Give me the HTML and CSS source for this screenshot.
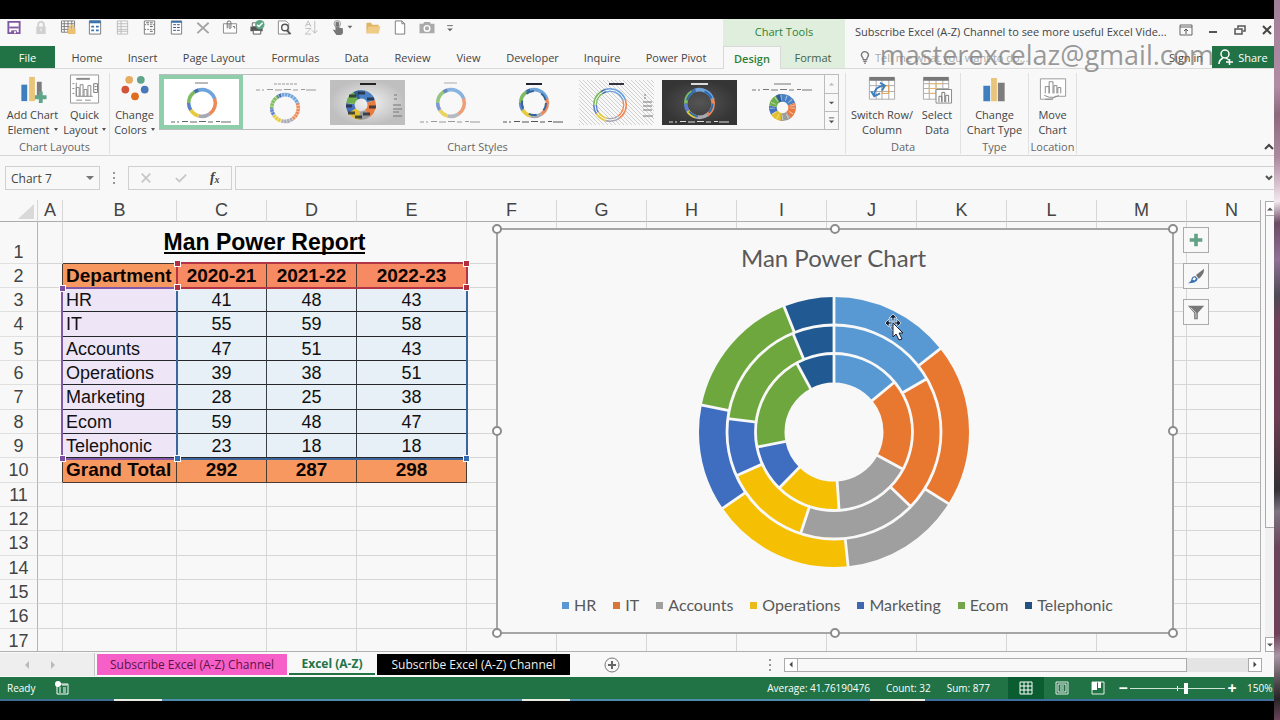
FILE: index.html
```html
<!DOCTYPE html>
<html lang="en">
<head>
<meta charset="utf-8">
<title>Subscribe Excel (A-Z) Channel to see more useful Excel Videos</title>
<link rel="stylesheet" href="styles.css">
</head>
<body>
<svg class="defs" aria-hidden="true">
  <symbol id="ring" viewBox="0 0 36 36">
    <g fill="none" stroke-width="4">
      <circle cx="18" cy="18" r="15" stroke="#6fa3dc" pathLength="100" stroke-dasharray="26 100" transform="rotate(-110 18 18)"/>
      <circle cx="18" cy="18" r="15" stroke="#ee8a58" pathLength="100" stroke-dasharray="21 100" transform="rotate(-20 18 18)"/>
      <circle cx="18" cy="18" r="15" stroke="#a9a9b4" pathLength="100" stroke-dasharray="14 100" transform="rotate(55 18 18)"/>
      <circle cx="18" cy="18" r="15" stroke="#e8cb3c" pathLength="100" stroke-dasharray="12 100" transform="rotate(105 18 18)"/>
      <circle cx="18" cy="18" r="15" stroke="#5c80cc" pathLength="100" stroke-dasharray="9 100" transform="rotate(148 18 18)"/>
      <circle cx="18" cy="18" r="15" stroke="#7fbb60" pathLength="100" stroke-dasharray="16 100" transform="rotate(180 18 18)"/>
      <circle cx="18" cy="18" r="15" stroke="#4570a8" pathLength="100" stroke-dasharray="5 100" transform="rotate(236 18 18)"/>
    </g>
  </symbol>
  <symbol id="thick" viewBox="0 0 30 30">
    <g fill="none" stroke-width="8">
      <circle cx="15" cy="15" r="10" stroke="#4a80c4" pathLength="100" stroke-dasharray="22 100" transform="rotate(-100 15 15)"/>
      <circle cx="15" cy="15" r="10" stroke="#e87b42" pathLength="100" stroke-dasharray="20 100" transform="rotate(-20 15 15)"/>
      <circle cx="15" cy="15" r="10" stroke="#9c9c9c" pathLength="100" stroke-dasharray="14 100" transform="rotate(52 15 15)"/>
      <circle cx="15" cy="15" r="10" stroke="#e2bf2c" pathLength="100" stroke-dasharray="14 100" transform="rotate(98 15 15)"/>
      <circle cx="15" cy="15" r="10" stroke="#4570c0" pathLength="100" stroke-dasharray="11 100" transform="rotate(148 15 15)"/>
      <circle cx="15" cy="15" r="10" stroke="#6fae4c" pathLength="100" stroke-dasharray="15 100" transform="rotate(188 15 15)"/>
      <circle cx="15" cy="15" r="10" stroke="#2f5f96" pathLength="100" stroke-dasharray="6 100" transform="rotate(240 15 15)"/>
    </g>
  </symbol>
  <symbol id="legend" viewBox="0 0 62 3"><path d="M1 2h4M7 2h2M12 1.500h6M20 2h7M29 1.500h7M38 2h5M46 1.500h4M51 2h10" stroke="currentColor" stroke-width="1"/></symbol>
  <symbol id="bars" viewBox="0 0 24 26"><path d="M1 9h7v16H1z" fill="#3f7fbd"/><path d="M9 1h6v24H9z" fill="#e8c57a"/><path d="M16 6h7v19h-7z" fill="#7d7d7d"/></symbol>
  <pattern id="hatch" width="4" height="4" patternUnits="userSpaceOnUse"><path d="M0 0l4 4M-1 3l2 2M3-1l2 2" stroke="#cfcfcf" stroke-width="1"/></pattern>
  <radialGradient id="grey"><stop offset="0" stop-color="#f1f1f1"/><stop offset="1" stop-color="#bfbfbf"/></radialGradient>
  <radialGradient id="dark"><stop offset="0" stop-color="#555"/><stop offset="1" stop-color="#353535"/></radialGradient>
</svg>

<div class="screen">
<main class="app">
  <header class="top">
    <div class="top-left">
      <div class="qat">
        <button aria-label="Save"><svg viewBox="0 0 16 16"><path d="M2 2h12v12H2z" fill="#fff" stroke="#7f57a0" stroke-width="2"/><path d="M3 8h10" stroke="#7f57a0" stroke-width="2"/><path d="M5 11h6v3H5z" fill="#7f57a0"/><path d="M8 12h2v2H8z" fill="#fff"/></svg></button>
        <button aria-label="Protect"><svg viewBox="0 0 16 16"><path d="M3 7h10v8H3z" fill="#d0d0d0"/><path d="M5 8V5q0-3 3-3t3 3v3" fill="none" stroke="#d0d0d0" stroke-width="2"/><path d="M8 9v3" stroke="#fff"/></svg></button>
        <button aria-label="Lock cell"><svg viewBox="0 0 16 16"><path d="M1 1h14v12H1zM1 4h14M1 7h14M1 10h14M4 1v12M8 1v12M12 1v12" fill="#fff" stroke="#777"/><path d="M8 9h8v6H8z" fill="#ebc272"/><path d="M10 9V7q2-2 4 0v2" fill="none" stroke="#ebc272" stroke-width="2"/></svg></button>
        <button aria-label="Form"><svg viewBox="0 0 16 16"><path d="M2 1h12v14H2z" fill="#fff" stroke="#777"/><path d="M2 2h12" stroke="#3974ae" stroke-width="3"/><path d="M4 7h3M9 7h3M4 11h3M9 11h3" stroke="#3974ae" stroke-width="2"/></svg></button>
        <button aria-label="Sheet"><svg viewBox="0 0 16 16"><path d="M3 1h11v14H3zM3 4h11M3 7h11M3 10h11M3 12h11M7 1v14" fill="none" stroke="#bbb"/></svg></button>
        <button aria-label="Page breaks"><svg viewBox="0 0 16 16"><path d="M3 1h11v14H3z" fill="#fff" stroke="#777"/><path d="M3 5h11M3 10h11" stroke="#777" stroke-dasharray="2 1"/><path d="M5 3h3M9 7h3M9 12h3M9 3h3" stroke="#555"/></svg></button>
        <button aria-label="List"><svg viewBox="0 0 16 16"><path d="M3 1h11v14H3z" fill="#fff" stroke="#777"/><path d="M3 2h11" stroke="#3974ae" stroke-width="2"/><path d="M5 5h3M9 5h3M5 8h3M9 8h3M5 11h3M9 11h3" stroke="#34507a" stroke-width="1"/></svg></button>
        <button aria-label="Delete"><svg viewBox="0 0 16 16"><path d="M2 3l12 11M14 3L2 14" stroke="#a4a4a4" stroke-width="2"/></svg></button>
        <button aria-label="Attach"><svg viewBox="0 0 16 16"><path d="M1 4h14v10H1z" fill="#fff" stroke="#888"/><path d="M5 9V3q0-2 2-2t2 2v5q0 1-1 1T7 8V4M11 7h2v2" fill="none" stroke="#666"/></svg></button>
        <button aria-label="Quick print"><svg viewBox="0 0 16 16"><path d="M1 7h13v5H1z" fill="#555"/><path d="M4 11h8v4H4z" fill="#fff" stroke="#555"/><path d="M3 3h5v4H3z" fill="#fff" stroke="#666"/><circle cx="11" cy="5" r="5" fill="#5ea487"/><path d="M8 5l2 2 4-4" fill="none" stroke="#fff" stroke-width="1.500"/></svg></button>
        <button aria-label="Print preview"><svg viewBox="0 0 16 16"><path d="M2 1h8l3 3v11H2z" fill="#fff" stroke="#888"/><circle cx="9" cy="8" r="3.500" fill="#f7f7f7" stroke="#555" stroke-width="1.500"/><path d="M11 11l4 4" stroke="#555" stroke-width="2"/></svg></button>
        <button aria-label="Sort"><svg viewBox="0 0 16 16"><path d="M2 7l3-6 3 6M3 5h4M2 9h6l-6 6h6M12 1v13M9 11l3 3 3-3" fill="none" stroke="#bbb"/></svg></button>
        <button aria-label="Touch mode" class="wide"><svg viewBox="0 0 24 16"><path d="M5 3q2-3 4 0v5l4 1v5l-2 2H6L2 10l3 1z" fill="#777"/><circle cx="7" cy="4" r="3.500" fill="none" stroke="#999"/><path d="M18 6h5l-2.500 3z" fill="#666"/></svg></button>
        <button aria-label="Open"><svg viewBox="0 0 16 16"><path d="M1 3h5l1 2h7v9H1z" fill="#dfb463"/><path d="M3 7h13l-2 7H1z" fill="#f0cb85"/></svg></button>
        <button aria-label="New"><svg viewBox="0 0 16 16"><path d="M3 1h7l3 3v11H3zM10 1v3h3" fill="#fff" stroke="#777"/></svg></button>
        <button aria-label="Camera"><svg viewBox="0 0 16 16"><path d="M0 4h4l1-2h6l1 2h4v10H0z" fill="#aaa"/><circle cx="8" cy="9" r="3" fill="#aaa" stroke="#fff" stroke-width="1.500"/></svg></button>
        <button aria-label="Customize toolbar" class="more"><svg viewBox="4 0 8 16"><path d="M5 6h6" stroke="#666"/><path d="M5 9h6l-3 3z" fill="#666"/></svg></button>
      </div>
      <nav class="tabs">
        <button class="file">File</button><button>Home</button><button>Insert</button><button>Page Layout</button><button>Formulas</button><button>Data</button><button>Review</button><button>View</button><button>Developer</button><button>Inquire</button><button>Power Pivot</button>
      </nav>
    </div>
    <div class="context">
      <span class="context-title">Chart Tools</span>
      <nav class="context-tabs"><button class="active">Design</button><button>Format</button></nav>
    </div>
    <div class="top-right">
      <div class="caption">
        <h1>Subscribe Excel (A-Z) Channel to see more useful Excel Vide...</h1>
        <div class="window-buttons">
          <button aria-label="Ribbon display options"><svg viewBox="0 0 14 12"><path d="M1 1h12v10H1zM1 3h12" fill="none" stroke="#666"/><path d="M7 10V5M5 7l2-2 2 2" fill="none" stroke="#555"/></svg></button>
          <button aria-label="Minimize"><svg viewBox="0 0 14 12"><path d="M3 8h8" stroke="#555" stroke-width="2"/></svg></button>
          <button aria-label="Restore"><svg viewBox="0 0 14 12"><path d="M5 4V2h7v5h-2M2 5h7v5H2z" fill="none" stroke="#555" stroke-width="1.500"/></svg></button>
          <button aria-label="Close"><svg viewBox="0 0 14 12"><path d="M3 2l8 8M11 2l-8 8" stroke="#444" stroke-width="2"/></svg></button>
        </div>
      </div>
      <div class="account">
        <svg class="bulb" viewBox="0 0 12 16"><path d="M4 11q0-2-1.500-3.500Q1 5 3 3t5-.5q3 2 1.500 5Q8 9 8 11zM4 13h4M5 15h2" fill="none" stroke="#777" stroke-width="1.500"/></svg>
        <input class="tell" aria-label="Tell me" placeholder="Tell me what you want to do...">
        <button class="sign">Sign in</button>
        <button class="share"><svg viewBox="0 0 16 16"><circle cx="7" cy="5" r="4" fill="none" stroke="#fff" stroke-width="1.500"/><path d="M1 15q0-4 4-6M8 9l3 2M8 13h7M11.500 10v6" fill="none" stroke="#fff" stroke-width="1.500"/></svg>Share</button>
      </div>
      <span class="watermark">masterexcelaz@gmail.com</span>
    </div>
  </header>

  <section class="ribbon">
    <div class="group layouts">
      <div class="tools">
        <button class="tool"><svg viewBox="0 0 32 32"><path d="M4 11h6v17H4z" fill="#3f7fbd"/><path d="M12 3h6v25h-6z" fill="#e8c57a"/><path d="M20 8h5v15h-5z" fill="#7d7d7d"/><path d="M24 18v12M18 24h12" stroke="#5fa58a" stroke-width="4"/></svg><span>Add Chart<br>Element<i class="caret"></i></span></button>
        <button class="tool"><svg viewBox="0 0 32 32"><path d="M1 1h29v29H1z" fill="#fff" stroke="#999"/><path d="M7 5h14" stroke="#888" stroke-width="2"/><path d="M7 9v14h17M7 23V14h3v9M11 23V11h3v12M15 23V16h3v7M19 23V12h3v11M3 10h2M3 15h2M3 20h2M7 27h6M16 27h6" fill="none" stroke="#888"/><path d="M25 10h4v9h-4zM26 13h2M26 16h2" fill="none" stroke="#777"/></svg><span>Quick<br>Layout<i class="caret"></i></span></button>
      </div>
      <h2>Chart Layouts</h2>
    </div>
    <div class="group styles">
      <div class="tools">
        <button class="tool"><svg viewBox="0 0 32 32"><circle cx="10" cy="6" r="4" fill="#e6ad60"/><circle cx="22" cy="6" r="4" fill="#5fa58a"/><circle cx="6" cy="16" r="4" fill="#d2553a"/><circle cx="26" cy="16" r="4" fill="#4a78b8"/><circle cx="16" cy="23" r="4" fill="#df6d1c"/></svg><span>Change<br>Colors<i class="caret"></i></span></button>
        <div class="gallery">
          <button class="selected" aria-label="Style 1"><svg viewBox="0 0 75 45"><path d="M31 3h13" stroke="#777"/><use href="#ring" x="22" y="7" width="32" height="32"/><use href="#legend" x="6" y="40" width="62" height="3" color="#666"/></svg></button>
          <button aria-label="Style 2"><svg viewBox="0 0 75 45"><path d="M27 4h23" stroke="#999" stroke-dasharray="3 1"/><use href="#legend" x="8" y="8" width="62" height="3" color="#999"/><use href="#ring" x="22" y="12" width="32" height="32"/><circle cx="38" cy="28" r="13" fill="none" stroke="#fff" stroke-width="4" stroke-dasharray="1 2" opacity=".5"/></svg></button>
          <button aria-label="Style 3"><svg viewBox="0 0 75 45"><path d="M0 0h75v45H0z" fill="url(#grey)"/><path d="M30 4h16" stroke="#222" stroke-width="2"/><use href="#thick" x="15" y="9" width="32" height="32"/><path d="M19 16h7M28 13h7M37 19h7M39 27h7M33 34h7M25 37h7M18 33h7M16 26h6" stroke="#252b33" stroke-width="3" opacity=".8"/><path d="M64 15h3M64 19h3M63 25h8M63 29h9M63 32h6M63 36h9" stroke="#777"/></svg></button>
          <button aria-label="Style 4"><svg viewBox="0 0 75 45"><path d="M31 3h13" stroke="#aaa"/><g opacity=".8"><use href="#ring" x="22" y="7" width="32" height="32"/></g><use href="#legend" x="6" y="40" width="62" height="3" color="#999"/></svg></button>
          <button aria-label="Style 5"><svg viewBox="0 0 75 45"><path d="M30 4h16" stroke="#223" stroke-width="2"/><use href="#ring" x="22" y="7" width="32" height="32"/><circle cx="38" cy="23" r="12" fill="none" stroke="#34649c" stroke-width="2" stroke-dasharray="8 8"/><use href="#legend" x="6" y="40" width="62" height="3" color="#555"/></svg></button>
          <button aria-label="Style 6"><svg viewBox="0 0 75 45"><path d="M0 0h75v45H0z" fill="url(#hatch)"/><path d="M30 4h15" stroke="#334" stroke-width="2"/><use href="#ring" x="13" y="7" width="36" height="36"/><circle cx="31" cy="25" r="15" fill="none" stroke="#fff"/><path d="M65 15h2M65 18h2M64 22h9M64 26h9M64 30h9M64 36h10" stroke="#777"/></svg></button>
          <button aria-label="Style 7"><svg viewBox="0 0 75 45"><path d="M0 0h75v45H0z" fill="url(#dark)"/><path d="M29 4h17" stroke="#ddd" stroke-width="2"/><use href="#ring" x="21" y="7" width="33" height="33"/><circle cx="37.500" cy="23.500" r="13" fill="none" stroke="#2d6bb0" stroke-width="2" stroke-dasharray="10 12"/><use href="#legend" x="6" y="40" width="62" height="3" color="#ddd"/></svg></button>
          <button aria-label="Style 8"><svg viewBox="0 0 75 45"><path d="M29 4h17" stroke="#777" stroke-width="1"/><use href="#legend" x="6" y="8" width="62" height="3" color="#777"/><use href="#thick" x="23" y="13" width="29" height="29"/><circle cx="37.500" cy="27.500" r="10" fill="none" stroke="#fff" stroke-width="5" stroke-dasharray="1 4" opacity=".5"/></svg></button>
          <div class="gallery-scroll">
            <button aria-label="Previous styles"><svg viewBox="0 0 8 8"><path d="M1 5l3-3 3 3z" fill="#bbb"/></svg></button>
            <button aria-label="Next styles"><svg viewBox="0 0 8 8"><path d="M1 3l3 3 3-3z" fill="#555"/></svg></button>
            <button aria-label="More styles"><svg viewBox="0 0 8 8"><path d="M1 1h6" stroke="#555"/><path d="M1 4l3 3 3-3z" fill="#555"/></svg></button>
          </div>
        </div>
      </div>
      <h2>Chart Styles</h2>
    </div>
    <div class="group data">
      <div class="tools">
        <button class="tool"><svg viewBox="0 0 32 32"><path d="M3 4h26v22H3zM3 12h26M3 18h26M10 4v22M16 4v22M23 4v22" fill="#fff" stroke="#aaa"/><path d="M3 5h26" stroke="#777" stroke-width="4"/><path d="M16 12h7v8h-7z" fill="none" stroke="#e69b45"/><path d="M8 22q0-9 10-10M14 9l5 3-3 5M5 18l3 5 6-3" fill="none" stroke="#3f7fbd" stroke-width="2"/></svg><span>Switch Row/<br>Column</span></button>
        <button class="tool"><svg viewBox="0 0 32 32"><path d="M2 4h26v22H2zM2 10h26M2 15h26M2 20h26M8 4v22M15 4v22M22 4v22" fill="#fff" stroke="#aaa"/><path d="M8 10h14M8 15h8M8 20h8M8 10v10M15 10v10" stroke="#e8b871"/><path d="M2 5h26" stroke="#777" stroke-width="4"/><path d="M15 16h16v14H15z" fill="#fff" stroke="#888"/><path d="M18 29v-6h3v6M21 29V19h3v10M25 29v-7h3v7" fill="none" stroke="#777"/></svg><span>Select<br>Data</span></button>
      </div>
      <h2>Data</h2>
    </div>
    <div class="group type">
      <div class="tools"><button class="tool"><svg viewBox="0 0 32 32"><use href="#bars" x="3" y="3" width="26" height="26"/></svg><span>Change<br>Chart Type</span></button></div>
      <h2>Type</h2>
    </div>
    <div class="group location">
      <div class="tools"><button class="tool"><svg viewBox="0 0 32 32"><path d="M3 5h26v18H18l-3 3H3z" fill="#fff" stroke="#999"/><path d="M8 20v-7h4v7M12 20V8h4v12M17 20v-8h3v8M21 20v-6h3v6M7 22l5 2h6l4-2M8 26h8" fill="none" stroke="#888"/></svg><span>Move<br>Chart</span></button></div>
      <h2>Location</h2>
    </div>
    <button class="collapse" aria-label="Collapse the ribbon"><svg viewBox="0 0 10 8"><path d="M1 6l4-4 4 4" fill="none" stroke="#444" stroke-width="2"/></svg></button>
  </section>

  <section class="formula-bar">
    <div class="name-box"><input aria-label="Name box" value="Chart 7"><button aria-label="Names"><svg viewBox="0 0 8 8"><path d="M0 2h8L4 6z" fill="#777"/></svg></button></div>
    <span class="dots"></span>
    <div class="formula-buttons">
      <button aria-label="Cancel"><svg viewBox="0 0 14 14"><path d="M2 2l10 10M12 2L2 12" stroke="#c6c6c6" stroke-width="2"/></svg></button>
      <button aria-label="Enter"><svg viewBox="0 0 14 14"><path d="M1 7l4 4 8-8" fill="none" stroke="#c6c6c6" stroke-width="2"/></svg></button>
      <button aria-label="Insert function" class="fx">f<sub>x</sub></button>
    </div>
    <div class="formula"><input aria-label="Formula"><button aria-label="Expand formula bar"><svg viewBox="0 0 10 8"><path d="M2 2l3 3 3-3" fill="none" stroke="#555" stroke-width="2"/></svg></button></div>
  </section>

  <section class="work">
    <div class="sheet">
      <table>
        <colgroup><col class="c-head"><col class="c-a"><col class="c-b"><col class="c-n"><col class="c-n"><col class="c-e"><col class="c-n"><col class="c-n"><col class="c-n"><col class="c-n"><col class="c-n"><col class="c-n"><col class="c-n"><col class="c-n"><col class="c-n"></colgroup>
        <thead><tr><th class="corner"><svg viewBox="0 0 16 15"><path d="M16 0v15H0z" fill="#d9d9d9"/></svg></th><th>A</th><th>B</th><th>C</th><th>D</th><th>E</th><th>F</th><th>G</th><th>H</th><th>I</th><th>J</th><th>K</th><th>L</th><th>M</th><th>N</th></tr></thead>
        <tbody>
          <tr class="title-row"><th>1</th><td></td><td colspan="4" class="report"><span>Man Power Report</span></td><td></td><td></td><td></td><td></td><td></td><td></td><td></td><td></td><td></td></tr>
          <tr class="fields"><th>2</th><td></td><td class="dept">Department</td><td>2020-21</td><td>2021-22</td><td>2022-23</td><td></td><td></td><td></td><td></td><td></td><td></td><td></td><td></td><td></td></tr>
          <tr class="rec"><th>3</th><td></td><td>HR</td><td>41</td><td>48</td><td>43</td><td></td><td></td><td></td><td></td><td></td><td></td><td></td><td></td><td></td></tr>
          <tr class="rec"><th>4</th><td></td><td>IT</td><td>55</td><td>59</td><td>58</td><td></td><td></td><td></td><td></td><td></td><td></td><td></td><td></td><td></td></tr>
          <tr class="rec"><th>5</th><td></td><td>Accounts</td><td>47</td><td>51</td><td>43</td><td></td><td></td><td></td><td></td><td></td><td></td><td></td><td></td><td></td></tr>
          <tr class="rec"><th>6</th><td></td><td>Operations</td><td>39</td><td>38</td><td>51</td><td></td><td></td><td></td><td></td><td></td><td></td><td></td><td></td><td></td></tr>
          <tr class="rec"><th>7</th><td></td><td>Marketing</td><td>28</td><td>25</td><td>38</td><td></td><td></td><td></td><td></td><td></td><td></td><td></td><td></td><td></td></tr>
          <tr class="rec"><th>8</th><td></td><td>Ecom</td><td>59</td><td>48</td><td>47</td><td></td><td></td><td></td><td></td><td></td><td></td><td></td><td></td><td></td></tr>
          <tr class="rec last"><th>9</th><td></td><td>Telephonic</td><td>23</td><td>18</td><td>18</td><td></td><td></td><td></td><td></td><td></td><td></td><td></td><td></td><td></td></tr>
          <tr class="total"><th>10</th><td></td><td>Grand Total</td><td>292</td><td>287</td><td>298</td><td></td><td></td><td></td><td></td><td></td><td></td><td></td><td></td><td></td></tr>
          <tr><th>11</th><td></td><td></td><td></td><td></td><td></td><td></td><td></td><td></td><td></td><td></td><td></td><td></td><td></td><td></td></tr>
          <tr><th>12</th><td></td><td></td><td></td><td></td><td></td><td></td><td></td><td></td><td></td><td></td><td></td><td></td><td></td><td></td></tr>
          <tr><th>13</th><td></td><td></td><td></td><td></td><td></td><td></td><td></td><td></td><td></td><td></td><td></td><td></td><td></td><td></td></tr>
          <tr><th>14</th><td></td><td></td><td></td><td></td><td></td><td></td><td></td><td></td><td></td><td></td><td></td><td></td><td></td><td></td></tr>
          <tr><th>15</th><td></td><td></td><td></td><td></td><td></td><td></td><td></td><td></td><td></td><td></td><td></td><td></td><td></td><td></td></tr>
          <tr><th>16</th><td></td><td></td><td></td><td></td><td></td><td></td><td></td><td></td><td></td><td></td><td></td><td></td><td></td><td></td></tr>
          <tr><th>17</th><td></td><td></td><td></td><td></td><td></td><td></td><td></td><td></td><td></td><td></td><td></td><td></td><td></td><td></td></tr>
        </tbody>
      </table>

      <div class="range names"><i class="tl"></i><i class="bl"></i></div>
      <div class="range values"><i class="bl"></i><i class="br"></i></div>
      <div class="range series"><i class="tl"></i><i class="tr"></i><i class="bl"></i><i class="br"></i></div>

      <figure class="chart">
        <figcaption>Man Power Chart</figcaption>
        <svg class="donut" viewBox="-135 -135 270 270" role="img" aria-label="Staff by department for three years">
          <g fill="none" stroke-width="29" transform="rotate(-90)">
            <g>
              <circle r="64" pathLength="292" stroke="#5899d3" stroke-dasharray="41 292"/>
              <circle r="64" pathLength="292" stroke="#e87730" stroke-dasharray="55 292" stroke-dashoffset="-41"/>
              <circle r="64" pathLength="292" stroke="#9f9f9f" stroke-dasharray="47 292" stroke-dashoffset="-96"/>
              <circle r="64" pathLength="292" stroke="#f5c004" stroke-dasharray="39 292" stroke-dashoffset="-143"/>
              <circle r="64" pathLength="292" stroke="#3f6ec0" stroke-dasharray="28 292" stroke-dashoffset="-182"/>
              <circle r="64" pathLength="292" stroke="#6fa73f" stroke-dasharray="59 292" stroke-dashoffset="-210"/>
              <circle r="64" pathLength="292" stroke="#215a92" stroke-dasharray="23 292" stroke-dashoffset="-269"/>
            </g>
            <g>
              <circle r="92" pathLength="287" stroke="#5899d3" stroke-dasharray="48 287"/>
              <circle r="92" pathLength="287" stroke="#e87730" stroke-dasharray="59 287" stroke-dashoffset="-48"/>
              <circle r="92" pathLength="287" stroke="#9f9f9f" stroke-dasharray="51 287" stroke-dashoffset="-107"/>
              <circle r="92" pathLength="287" stroke="#f5c004" stroke-dasharray="38 287" stroke-dashoffset="-158"/>
              <circle r="92" pathLength="287" stroke="#3f6ec0" stroke-dasharray="25 287" stroke-dashoffset="-196"/>
              <circle r="92" pathLength="287" stroke="#6fa73f" stroke-dasharray="48 287" stroke-dashoffset="-221"/>
              <circle r="92" pathLength="287" stroke="#215a92" stroke-dasharray="18 287" stroke-dashoffset="-269"/>
            </g>
            <g>
              <circle r="120.500" pathLength="298" stroke="#5899d3" stroke-dasharray="43 298"/>
              <circle r="120.500" pathLength="298" stroke="#e87730" stroke-dasharray="58 298" stroke-dashoffset="-43"/>
              <circle r="120.500" pathLength="298" stroke="#9f9f9f" stroke-dasharray="43 298" stroke-dashoffset="-101"/>
              <circle r="120.500" pathLength="298" stroke="#f5c004" stroke-dasharray="51 298" stroke-dashoffset="-144"/>
              <circle r="120.500" pathLength="298" stroke="#3f6ec0" stroke-dasharray="38 298" stroke-dashoffset="-195"/>
              <circle r="120.500" pathLength="298" stroke="#6fa73f" stroke-dasharray="47 298" stroke-dashoffset="-233"/>
              <circle r="120.500" pathLength="298" stroke="#215a92" stroke-dasharray="18 298" stroke-dashoffset="-280"/>
            </g>
          </g>
          <g fill="none" stroke="#f8f8f8" stroke-width="2.800">
            <circle r="78.500"/><circle r="107"/>
            <path d="M0-49v-87"/>
            <path d="M0-49v-30" transform="rotate(50.500)"/><path d="M0-49v-30" transform="rotate(118.400)"/><path d="M0-49v-30" transform="rotate(176.300)"/><path d="M0-49v-30" transform="rotate(224.400)"/><path d="M0-49v-30" transform="rotate(258.900)"/><path d="M0-49v-30" transform="rotate(331.600)"/>
            <path d="M0-78v-29" transform="rotate(60.200)"/><path d="M0-78v-29" transform="rotate(134.200)"/><path d="M0-78v-29" transform="rotate(198.200)"/><path d="M0-78v-29" transform="rotate(245.900)"/><path d="M0-78v-29" transform="rotate(277.200)"/><path d="M0-78v-29" transform="rotate(337.400)"/>
            <path d="M0-107v-29" transform="rotate(51.900)"/><path d="M0-107v-29" transform="rotate(122)"/><path d="M0-107v-29" transform="rotate(174)"/><path d="M0-107v-29" transform="rotate(235.600)"/><path d="M0-107v-29" transform="rotate(281.500)"/><path d="M0-107v-29" transform="rotate(338.300)"/>
          </g>
          <g transform="translate(59 -109)">
            <path d="M0-9l4 4H1v3h-2v-3h-3zM-8 0l4-4v3h3v2h-3v3zM8 0L4 4V1H1v-2h3v-3zM0 8l-3-4h3z" fill="#16243a" stroke="#fff" stroke-width=".7"/>
            <path d="M0 0v14l3-3 3 6 3-1-3-6h4z" fill="#fff" stroke="#223"/>
          </g>
        </svg>
        <ul class="legend">
          <li class="hr">HR</li><li class="it">IT</li><li class="accounts">Accounts</li><li class="operations">Operations</li><li class="marketing">Marketing</li><li class="ecom">Ecom</li><li class="telephonic">Telephonic</li>
        </ul>
        <i class="grip tl"></i><i class="grip tc"></i><i class="grip tr"></i><i class="grip ml"></i><i class="grip mr"></i><i class="grip bl"></i><i class="grip bc"></i><i class="grip br"></i>
        <div class="chart-buttons">
          <button aria-label="Chart elements"><svg viewBox="0 0 20 20"><path d="M10 3v14M3 10h14" stroke="#62a187" stroke-width="4"/></svg></button>
          <button aria-label="Chart styles"><svg viewBox="0 0 20 20"><path d="M19 2l-9 7 3 4q6-4 6-11z" fill="#737373"/><path d="M9 10l3 3q-1 5-11 5 4-2 4-5 1-3 4-3z" fill="#3b73b0"/><path d="M8 11l2 2-2 2-2-1z" fill="#fff"/></svg></button>
          <button aria-label="Chart filters"><svg viewBox="0 0 20 20"><path d="M1 3h18l-7 8v7H8v-7z" fill="#777"/><path d="M4 5l6 6v6" fill="none" stroke="#ddd"/></svg></button>
        </div>
      </figure>
    </div>
    <div class="vscroll">
      <button aria-label="Scroll up"><svg viewBox="0 0 8 8"><path d="M0 6h8L4 2z" fill="#555"/></svg></button>
      <div class="vtrack"><div class="vthumb"></div></div>
      <button aria-label="Scroll down"><svg viewBox="0 0 8 8"><path d="M0 2h8L4 6z" fill="#555"/></svg></button>
    </div>
  </section>

  <section class="sheet-bar">
    <div class="sheet-nav"><button aria-label="Previous sheet"><svg viewBox="0 0 8 8"><path d="M6 0v8L2 4z" fill="#bbb"/></svg></button><button aria-label="Next sheet"><svg viewBox="0 0 8 8"><path d="M2 0v8l4-4z" fill="#bbb"/></svg></button></div>
    <button class="sheet-tab pink">Subscribe Excel (A-Z) Channel</button>
    <button class="sheet-tab current">Excel (A-Z)</button>
    <button class="sheet-tab black">Subscribe Excel (A-Z) Channel</button>
    <button class="add" aria-label="New sheet"><svg viewBox="0 0 16 16"><circle cx="8" cy="8" r="7" fill="none" stroke="#777"/><path d="M8 4v8M4 8h8" stroke="#666" stroke-width="2"/></svg></button>
    <span class="dots"></span>
    <div class="hscroll">
      <button aria-label="Scroll left"><svg viewBox="0 0 8 8"><path d="M6 0v8L2 4z" fill="#444"/></svg></button>
      <div class="hthumb"></div><div class="htrack"></div>
      <button aria-label="Scroll right"><svg viewBox="0 0 8 8"><path d="M2 0v8l4-4z" fill="#444"/></svg></button>
    </div>
  </section>

  <footer class="status">
    <span>Ready</span>
    <svg class="macro" viewBox="0 0 14 14"><path d="M2 3h11v10H2z" fill="none" stroke="#fff"/><path d="M4 7h2M8 7h3M4 9h2M8 9h3M4 11h2M8 11h3M7 4h5" stroke="#fff"/><circle cx="3" cy="3" r="3" fill="#fff"/></svg>
    <div class="sums"><span>Average: 41.76190476</span><span>Count: 32</span><span>Sum: 877</span></div>
    <div class="views">
      <button class="on" aria-label="Normal"><svg viewBox="0 0 14 14"><path d="M1 1h12v12H1zM1 5h12M1 9h12M5 1v12M9 1v12" fill="none" stroke="#fff"/></svg></button>
      <button aria-label="Page layout"><svg viewBox="0 0 14 14"><path d="M1 1h12v12H1zM3 3h8v8H3zM5 5h4M5 7h4M5 9h4" fill="none" stroke="#e4efe8"/></svg></button>
      <button aria-label="Page break preview"><svg viewBox="0 0 14 14"><path d="M1 1h12v12H1z" fill="none" stroke="#e4efe8"/><path d="M1 1h5v8H1zM7 1h3v6H7z" fill="#fff"/></svg></button>
    </div>
    <div class="zoom"><button aria-label="Zoom out">−</button><input type="range" aria-label="Zoom" min="0" max="100" value="59"><button aria-label="Zoom in">+</button><span>150%</span></div>
  </footer>
  <div class="taskbar"></div>
</main>
<aside class="wallpaper"></aside>
</div>
</body>
</html>
```
FILE: styles.css
```css
* { box-sizing: border-box; }
body { margin: 0; background: #000; color: #444; font-family: "Open Sans", "Noto Sans", sans-serif; font-size: 12px; line-height: 15px; }
button { margin: 0; padding: 0; border: 0; background: none; color: inherit; font: inherit; white-space: nowrap; }
input { min-width: 0; border: 0; background: none; color: inherit; font: inherit; }
h1, h2, ul, figure { margin: 0; padding: 0; font: inherit; }
svg { display: block; }
.defs { position: absolute; width: 0; height: 0; }

.screen { display: grid; grid-template-columns: minmax(0, 1fr) 6px; min-height: 100vh; overflow: hidden; }
.app { display: flex; flex-direction: column; min-width: 0; padding: 19px 0 18px; overflow: hidden; }
.app > * { background-color: #f8f8f8; }
.wallpaper { background: linear-gradient(170deg, #a27f98 0, #b08da5 12%, #8c6a7c 16%, #ad8b9f 22%, #f2e7ee 28%, #6b4a63 31%, #8f7096 36%, #4d4b55 41%, #6b4257 44%, #6d3c52 58%, #4a3541 64%, #333036 68%, #7c7480 71%, #6a4459 76%, #6f4158 88%, #a895a3 91%, #4a4448 95%, #282427 97%, #6b4459 100%); }

/* title bar and tabs */
.top { display: flex; height: 50px; border-bottom: 1px solid #d9d9d9; font-size: 11px; }
.top-left { flex: 0 0 723px; display: flex; flex-direction: column; justify-content: space-between; }
.qat { display: flex; gap: 11px; padding-left: 6px; height: 16px; }
.qat svg { width: 16px; height: 15px; }
.qat .wide svg { width: 24px; }
.qat .more svg { width: 8px; }
.tabs { display: grid; grid-template-columns: 55px 64px 47px 96px 67px 55px 57px 55px 73px 66px 82px; height: 22px; }
.file { background: #217346; color: #fff; }
.context { flex: 0 0 122px; display: flex; flex-direction: column; justify-content: space-between; background: #dfeedd; color: #2c8136; text-align: center; }
.context-title { padding-top: 5px; }
.context-tabs { display: grid; grid-template-columns: 58px 1fr; height: 22px; }
.context-tabs button { color: #3f6245; }
.context-tabs .active { border: 1px solid #d9d9d9; border-bottom: 0; background: #f8f8f8; color: #2c8136; margin-bottom: -1px; font-weight: 600; }
.top-right { position: relative; flex: 1; min-width: 0; display: flex; flex-direction: column; justify-content: space-between; }
.caption { display: flex; justify-content: space-between; padding-left: 10px; }
.caption h1 { padding-top: 5px; white-space: nowrap; }
.window-buttons { display: flex; gap: 13px; padding-top: 2px; }
.window-buttons svg { width: 14px; height: 12px; }
.account { display: flex; align-items: center; height: 22px; padding-left: 14px; }
.bulb { width: 12px; height: 14px; }
.tell { flex: 1; padding: 0 4px; }
.tell::placeholder { color: #aaa; opacity: 1; }
.sign { padding-right: 9px; }
.share { display: flex; align-items: center; justify-content: center; gap: 4px; width: 62px; height: 22px; background: #217346; color: #fff; }
.share svg { width: 16px; height: 16px; }
.watermark { position: absolute; right: 60px; top: 18px; color: rgba(120, 120, 120, .75); font-size: 27px; line-height: 36px; }

/* ribbon */
.ribbon { display: flex; height: 87px; border-bottom: 1px solid #d4d4d4; font-size: 11px; }
.group { display: flex; flex-direction: column; justify-content: space-between; margin: 4px 0 1px; border-right: 1px solid #e1e1e1; text-align: center; }
.group h2 { color: #666; }
.tools { display: flex; justify-content: center; }
.tool { display: flex; flex-direction: column; align-items: center; gap: 2px; padding-top: 1px; }
.tool svg { width: 32px; height: 31px; }
.layouts { flex: 0 0 110px; }
.layouts .tool:first-child { width: 60px; }
.layouts .tool { width: 44px; }
.styles { flex: 0 0 733px; }
.styles .tools { justify-content: flex-start; }
.styles .tool { width: 49px; }
.data { flex: 0 0 115px; }
.data .tool:first-child { width: 68px; }
.data .tool { width: 42px; }
.type { flex: 0 0 68px; }
.location { flex: 0 0 48px; }
.caret { display: inline-block; margin-left: 4px; border: 2px solid transparent; border-top: 3px solid #555; border-bottom: 0; vertical-align: 3px; }
.gallery { flex: 1; display: flex; height: 56px; margin: 1px 6px 0 0; border: 1px solid #bcbcbc; }
.gallery > button { flex: 1 1 0; min-width: 0; display: grid; place-items: center; border: 4px solid transparent; }
.gallery > button > svg { width: 75px; height: 45px; }
.gallery .selected { border-color: #8fceab; background: #fff; }
.gallery-scroll { flex: 0 0 14px; display: grid; grid-template-rows: 1fr 1fr 1fr; border-left: 1px solid #bcbcbc; }
.gallery-scroll button { display: grid; place-items: center; }
.gallery-scroll button + button { border-top: 1px solid #bcbcbc; }
.gallery-scroll svg { width: 7px; height: 7px; }
.collapse { align-self: flex-end; margin: 0 0 4px auto; }
.collapse svg { width: 10px; height: 8px; }

/* formula bar */
.formula-bar { display: flex; align-items: center; height: 44px; }
.name-box { display: flex; align-items: center; width: 95px; height: 24px; margin-left: 5px; border: 1px solid #d0d0d0; }
.name-box input { flex: 1; padding: 0 5px; }
.name-box button { padding: 0 5px; }
.name-box svg { width: 8px; height: 8px; }
.dots { width: 2px; height: 12px; margin: 0 13px; background: repeating-linear-gradient(#999 0 2px, transparent 2px 5px); }
.formula-buttons { display: flex; align-items: center; justify-content: space-around; width: 104px; height: 24px; border: 1px solid #d0d0d0; }
.formula-buttons svg { width: 12px; height: 12px; }
.fx { font: italic bold 14px/16px "Liberation Serif", serif; }
.fx sub { font-size: 10px; line-height: 10px; vertical-align: -1px; }
.formula { flex: 1; display: flex; align-items: center; height: 24px; margin-left: 3px; border: 1px solid #d0d0d0; border-right: 0; }
.formula input { flex: 1; }
.formula svg { width: 10px; height: 8px; }

/* worksheet */
.work { display: flex; height: 452px; }
.sheet { position: relative; flex: 1; min-width: 0; overflow: hidden; border-right: 1px solid #b0b0b0; border-bottom: 1px solid #b0b0b0; color: #111; font: 18px/22px "Liberation Sans", Arial, sans-serif; }
.sheet table { table-layout: fixed; width: 1277px; border-collapse: separate; border-spacing: 0; }
.c-head { width: 38px; }
.c-a { width: 25px; }
.c-b { width: 114px; }
.c-n { width: 90px; }
.c-e { width: 110px; }
th, td { height: 24px; padding: 0; border-right: 1px solid #d6d6d6; border-bottom: 1px solid #d6d6d6; text-align: center; white-space: nowrap; }
th { color: #444; font-weight: 400; }
tbody tr:nth-child(3n+4) > * { height: 25px; }
.title-row > * { height: 42px; vertical-align: bottom; }
thead th { height: 22px; line-height: 21px; border-bottom-color: #adadad; }
tbody th { border-right-color: #b4b4b4; border-bottom-color: #e0e0e0; }
.corner svg { width: 16px; height: 15px; margin: 2px 0 0 18px; }
tbody .report { vertical-align: middle; }
.report span { border-bottom: 2px solid #000; color: #000; font-size: 23px; font-weight: 700; line-height: 24px; display: inline-block; height: 24px; }
.fields td:nth-child(n+3):nth-child(-n+6), .total td:nth-child(n+3):nth-child(-n+6) { border-right-color: #4a3a30; border-bottom-color: #4a3a30; background: #f79861; color: #0c0400; font-size: 19px; font-weight: 700; }
.fields td:nth-child(n+4):nth-child(-n+6) { background: #f78a62; }
.fields td:nth-child(3), .rec td:nth-child(3), .total td:nth-child(3) { padding-left: 3px; text-align: left; }
.rec td:nth-child(3) { background: #eee6f7; }
.rec td:nth-child(n+4):nth-child(-n+6) { background: #e7eff7; }
.rec td:nth-child(n+3):nth-child(-n+6) { border-right-color: #3c3f46; border-bottom-color: #25272b; }
.fields td:nth-child(2), .total td:nth-child(2) { border-right-color: #4a3a30; }
.report { border-bottom-color: #4a3a30; }
.range { position: absolute; }
.range i { position: absolute; width: 7px; height: 7px; border: 1px solid #fff; background: currentColor; }
.names { left: 61px; top: 87px; width: 117px; height: 173px; border: 2px solid #8458a8; border-right-width: 0; color: #7a4fa3; }
.values { left: 176px; top: 87px; width: 292px; height: 173px; border: 2px solid #3c659b; color: #356bb0; }
.series { left: 176px; top: 62px; width: 292px; height: 27px; border: 2px solid #b23445; color: #b03040; }
.range .tl { left: -4px; top: -4px; }
.range .tr { right: -4px; top: -4px; }
.range .bl { left: -4px; bottom: -4px; }
.range .br { right: -4px; bottom: -4px; }

/* floating chart */
.chart { position: absolute; left: 496px; top: 28px; width: 678px; height: 406px; display: flex; flex-direction: column; align-items: center; padding-right: 3px; border: 2px solid #a6a6a6; background: #f8f8f8; color: #595959; font-family: Lato, sans-serif; font-variant-ligatures: none; }
.chart figcaption { margin-top: 13px; font-size: 24px; line-height: 30px; }
.donut { width: 270px; height: 270px; margin-top: 24px; }
.legend { display: flex; gap: 17px; margin-top: 28px; margin-left: 8px; font-size: 16px; line-height: 20px; list-style: none; }
.legend li { display: flex; align-items: center; gap: 5px; }
.legend li::before { content: ""; width: 7px; height: 7px; background: var(--dot); }
.hr { --dot: #5899d3; }
.it { --dot: #d97536; }
.accounts { --dot: #9f9f9f; }
.operations { --dot: #e9bc1c; }
.marketing { --dot: #3f66b0; }
.ecom { --dot: #74a548; }
.telephonic { --dot: #215283; }
.grip { position: absolute; width: 10px; height: 10px; border: 2px solid #8c8c8c; border-radius: 50%; background: #fff; }
.grip.tl, .grip.tc, .grip.tr { top: -6px; }
.grip.bl, .grip.bc, .grip.br { bottom: -6px; }
.grip.tl, .grip.ml, .grip.bl { left: -6px; }
.grip.tr, .grip.mr, .grip.br { right: -6px; }
.grip.tc, .grip.bc { left: calc(50% - 5px); }
.grip.ml, .grip.mr { top: calc(50% - 5px); }
.chart-buttons { position: absolute; left: 100%; top: -3px; display: grid; gap: 10px; margin-left: 11px; }
.chart-buttons button { display: grid; place-items: center; width: 26px; height: 26px; border: 1px solid #ababab; background: #f8f8f8; }
.chart-buttons svg { width: 18px; height: 18px; }

.vscroll { flex: 0 0 9px; display: flex; flex-direction: column; margin: 1px 0 0 4px; background: #f0f0f0; overflow: hidden; }
.vscroll button { flex: 0 0 15px; display: grid; place-items: center; border: 1px solid #ababab; border-right: 0; background: #fff; }
.vscroll svg { width: 6px; height: 6px; }
.vtrack { flex: 1; }
.vthumb { height: 74%; border: 1px solid #ababab; border-width: 0 0 1px 1px; background: #f8f8f8; }

/* sheet tabs */
.sheet-bar { display: flex; align-items: center; height: 25px; padding-right: 12px; }
.sheet-nav { display: flex; gap: 18px; width: 95px; height: 23px; padding-left: 23px; border-right: 1px solid #c4c4c4; background: #eee; }
.sheet-nav svg { width: 8px; height: 8px; }
.sheet-tab { height: 21px; margin-left: 2px; }
.pink { width: 190px; background: #f75fc8; color: #5c1446; }
.current { width: 86px; border-bottom: 2px solid #217346; color: #217346; font-weight: 700; }
.black { width: 193px; background: #000; color: #eee; }
.add { margin-left: 34px; }
.add svg { width: 16px; height: 16px; }
.sheet-bar .dots { margin-left: auto; }
.hscroll { flex: 0 1 478px; display: flex; height: 14px; background: #e4e4e4; }
.hscroll button { flex: 0 0 14px; display: grid; place-items: center; border: 1px solid #ababab; background: #fff; }
.hscroll svg { width: 6px; height: 7px; }
.hthumb { flex: 390; border: 1px solid #ababab; border-left: 0; background: #f8f8f8; }
.htrack { flex: 61; }

/* status bar */
.app .status { display: flex; align-items: center; height: 22px; padding-left: 7px; background: #217346; color: #fff; font-size: 10px; white-space: nowrap; }
.macro { width: 14px; height: 14px; margin-left: 20px; }
.sums { display: flex; gap: 16px; margin-left: auto; }
.views { display: flex; height: 22px; margin-left: 18px; }
.views button { display: grid; place-items: center; width: 36px; }
.views .on { background: #0b5c30; }
.views svg { width: 14px; height: 14px; }
.zoom { display: flex; align-items: center; gap: 2px; margin-left: 2px; }
.zoom button { width: 10px; font-size: 16px; font-weight: 700; }
.zoom span { margin-left: 8px; width: 27px; }
.zoom input { width: 95px; height: 12px; margin: 0; appearance: none; background: linear-gradient(#cfe3d6, #cfe3d6) center / 100% 1px no-repeat, linear-gradient(#fff, #fff) 50% 50% / 1px 5px no-repeat; }
.zoom input::-webkit-slider-thumb { appearance: none; width: 4px; height: 11px; background: #fff; }
.app .taskbar { height: 2px; background: linear-gradient(90deg, #3e6f8e 0 114px, #e8ece4 114px 162px, #4f8cab 162px 522px, #e8ece4 522px 570px, #4f8cab 570px 870px, #e8ece4 870px 925px, #3e6f9e 925px); }
```
